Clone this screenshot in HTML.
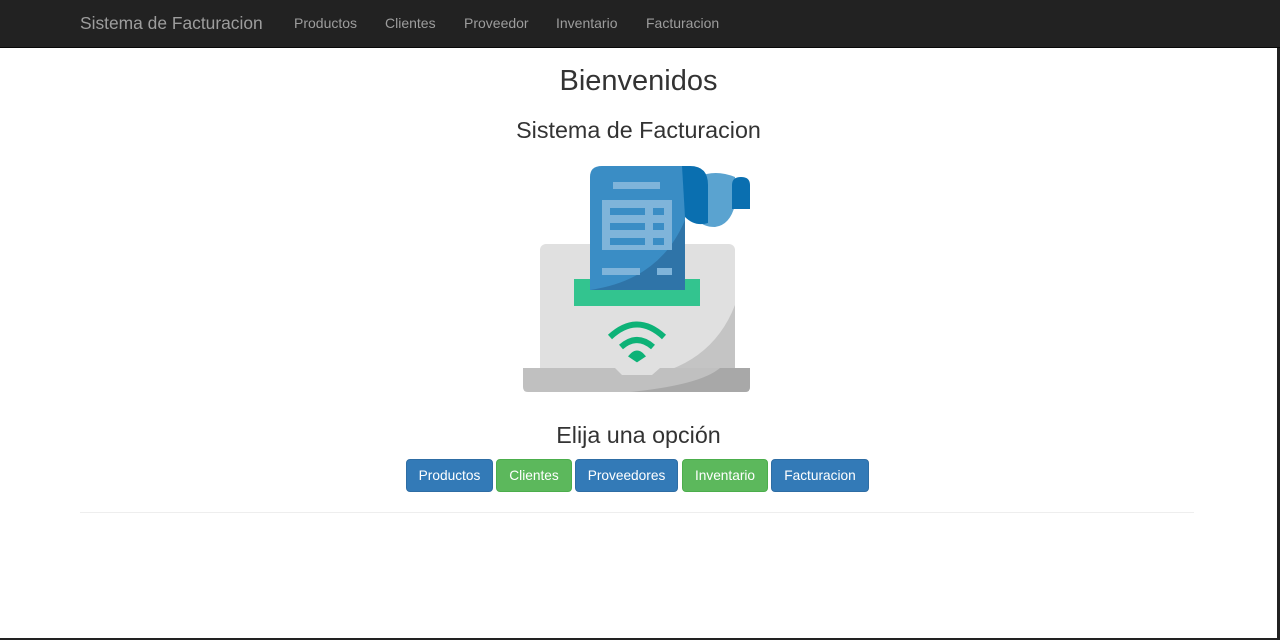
<!DOCTYPE html>
<html><head><meta charset="utf-8"><style>
*{box-sizing:border-box}
body{margin:0;width:1280px;height:640px;overflow:hidden;background:#fff;font-family:"Liberation Sans",Arial,sans-serif;color:#333;position:relative}
.nav{position:absolute;left:0;top:0;width:1280px;height:48px;background:#222;border-bottom:1px solid #080808}
.nav span{position:absolute;top:0;line-height:47px;color:#9d9d9d;font-size:14px}
.nav .brand{font-size:17.4px;left:80px}
h1{position:absolute;top:64px;left:0;width:1277px;text-align:center;margin:0;font-size:29px;font-weight:400;line-height:34px}
h3{position:absolute;left:0;width:1277px;text-align:center;margin:0;font-size:23.3px;font-weight:400;line-height:28px}
.btn{position:absolute;top:459px;height:33px;border-radius:4px;color:#fff;font-size:13.7px;line-height:31px;text-align:center;border:1px solid}
.b{background:#337ab7;border-color:#2e6da4}
.g{background:#5cb85c;border-color:#4cae4c}
hr{position:absolute;top:512px;left:80px;width:1114px;margin:0;border:0;border-top:1px solid #eee}
.rb{position:absolute;right:0;top:48px;width:3px;height:592px;background:#222}
.bb{position:absolute;left:0;bottom:0;width:1280px;height:2px;background:#222}
</style></head><body>
<div class="nav">
<span class="brand">Sistema de Facturacion</span>
<span style="left:294px">Productos</span>
<span style="left:385px">Clientes</span>
<span style="left:464px">Proveedor</span>
<span style="left:556px">Inventario</span>
<span style="left:646px">Facturacion</span>
</div>
<h1>Bienvenidos</h1>
<h3 style="top:116px">Sistema de Facturacion</h3>
<svg style="position:absolute;left:510px;top:155px" width="260" height="250" viewBox="0 0 260 250">
<rect x="30" y="89" width="195" height="135" rx="6" fill="#e0e0e0"/>
<path d="M225 150 Q200 215 120 224 L225 224Z" fill="#c4c4c4"/>
<path d="M13 213 H105 L112 220 H142 L150 213 H240 V232 Q240 237 235 237 H18 Q13 237 13 232Z" fill="#c0c0c0"/>
<path d="M150 213 H240 V232 Q240 237 235 237 H120 Q190 230 210 213Z" fill="#a8a8a8"/>
<rect x="64" y="124" width="126" height="27" fill="#33c48f"/>
<path d="M188 22 Q205 14 225 22 V50 Q220 70 205 72 Q193 72 188 65 Z" fill="#5aa3d0"/>
<path d="M222 30 Q222 22 231 22 Q240 22 240 30 V54 H222 Z" fill="#0a6fb0"/>
<path d="M92 11 H175 V135 H80 V22 Q80 11 92 11Z" fill="#3a8dc5"/>
<path d="M172 11 H180 Q198 11 198 30 V68 Q185 72 175 62 Z" fill="#0a6fb0"/>
<path d="M175 65 Q150 125 80 135 H175Z" fill="#2f74a8"/>
<rect x="103" y="27" width="47" height="7" fill="#7fb4da"/>
<rect x="92" y="45" width="70" height="50" fill="#7fb4da"/>
<g fill="#3a8dc5"><rect x="100" y="53" width="35" height="7"/><rect x="143" y="53" width="11" height="7"/><rect x="100" y="68" width="35" height="7"/><rect x="143" y="68" width="11" height="7"/><rect x="100" y="83" width="35" height="7"/><rect x="143" y="83" width="11" height="7"/></g>
<rect x="92" y="113" width="38" height="7" fill="#7fb4da"/>
<rect x="147" y="113" width="15" height="7" fill="#7fb4da"/>
<g fill="none" stroke="#0db277" stroke-width="6" stroke-linecap="butt">
<path d="M100 182 Q127 157 154 182"/>
<path d="M111 192 Q127 178 143 192"/>
</g>
<path d="M121 201 Q127 194 133 201 L127 205Z" fill="#0db277" stroke="#0db277" stroke-width="4"/>
</svg>
<h3 style="top:421px">Elija una opción</h3>
<div class="btn b" style="left:406px;width:87px">Productos</div>
<div class="btn g" style="left:496px;width:76px">Clientes</div>
<div class="btn b" style="left:575px;width:103px">Proveedores</div>
<div class="btn g" style="left:682px;width:86px">Inventario</div>
<div class="btn b" style="left:771px;width:98px">Facturacion</div>
<hr>
<div class="rb"></div><div class="bb"></div>
</body></html>
